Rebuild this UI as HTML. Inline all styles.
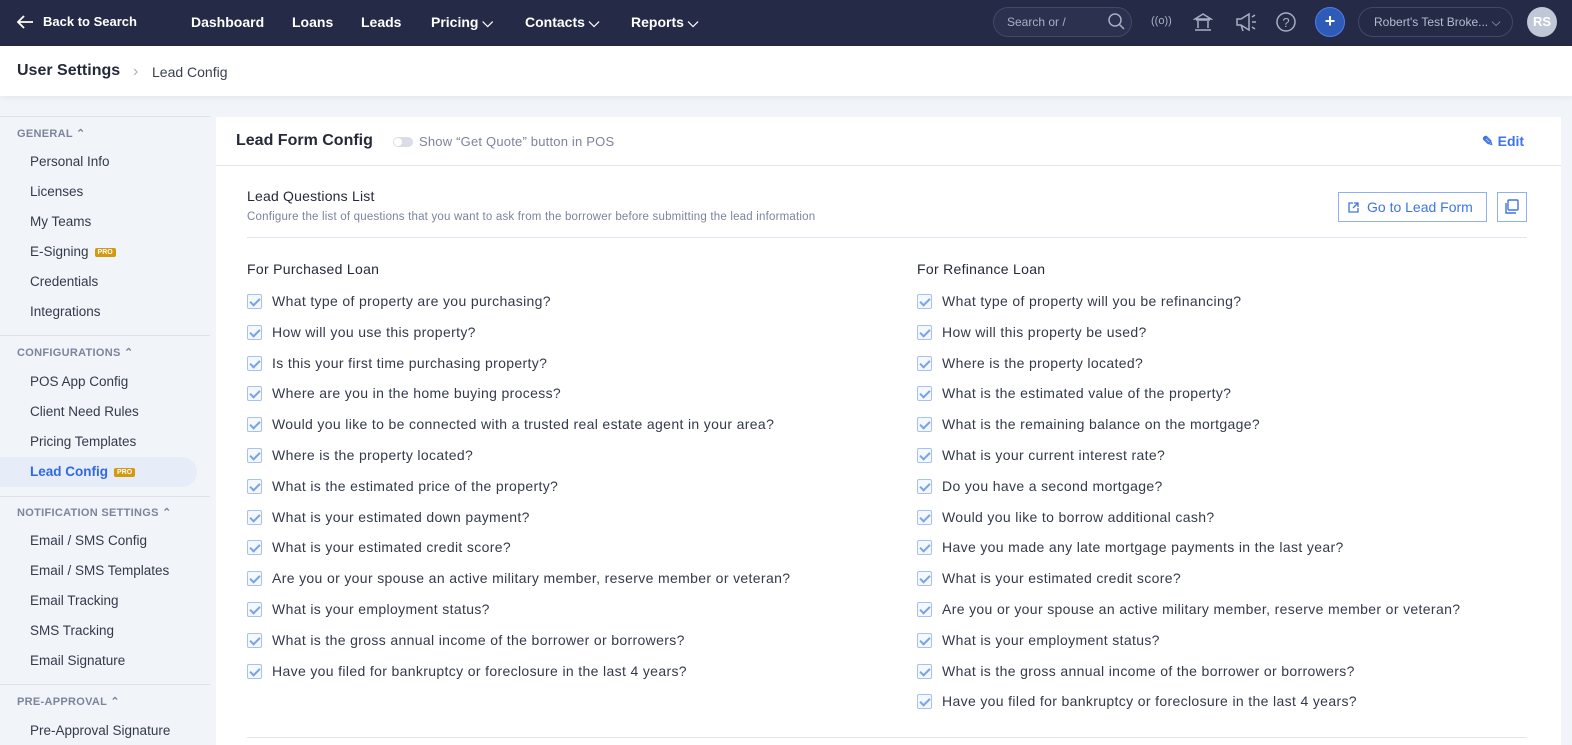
<!DOCTYPE html>
<html><head><meta charset="utf-8"><style>
*{box-sizing:border-box;margin:0;padding:0}
html,body{width:1572px;height:745px;overflow:hidden}
body{background:#f1f4f9;font-family:"Liberation Sans",sans-serif;color:#2b3040;position:relative}
.nav{position:absolute;left:0;top:0;width:1572px;height:46px;background:#252a46;color:#fff}
.nav span{position:absolute;top:14px;font-size:14px;font-weight:bold}
.crumb{position:absolute;top:46px;left:0;width:1572px;height:50px;background:#fff;box-shadow:0 2px 6px rgba(0,0,0,.05)}
.sh{position:absolute;left:17px;font-size:11px;color:#7b849c;font-weight:bold;letter-spacing:.3px}
.si{position:absolute;left:30px;font-size:13.5px;color:#333a4a}
.pro{display:inline-block;background:#d39a10;color:#fff;font-size:7px;font-weight:bold;padding:1px 3px;border-radius:2px;vertical-align:2px;margin-left:6px}
.sep{position:absolute;left:0;width:210px;border-top:1px solid #dde2ea}
.panel{position:absolute;left:216px;top:117px;width:1345px;height:640px;background:#fff}
.q{position:absolute;font-size:14px;color:#333a4a;white-space:nowrap;letter-spacing:.35px}
.cb{position:absolute;width:15px;height:15px;border:1px solid #a9c1f0;border-radius:2px;background:#f4f8ff}
.cb:after{content:"";position:absolute;left:4px;top:1px;width:4px;height:8px;border:solid #7aa2ec;border-width:0 2px 2px 0;transform:rotate(45deg)}
</style></head><body>
<div class="nav">
<svg style="position:absolute;left:16px;top:14px" width="18" height="16" viewBox="0 0 18 16"><path d="M17 8H2M8 2L2 8l6 6" stroke="#fff" stroke-width="1.8" fill="none"/></svg>
<span style="left:43px;font-size:13px">Back to Search</span>
<span style="left:191px">Dashboard</span><span style="left:292px">Loans</span><span style="left:361px">Leads</span>
<span style="left:431px">Pricing ⌵</span><span style="left:525px">Contacts ⌵</span><span style="left:631px">Reports ⌵</span>
<div style="position:absolute;left:993px;top:7px;width:139px;height:30px;border:1px solid #424867;border-radius:15px;background:#2c3150"></div>
<span style="left:1007px;top:15px;font-size:12px;font-weight:normal;color:#a8aec3">Search or /</span>
<svg style="position:absolute;left:1108px;top:13px" width="18" height="18"><circle cx="7" cy="7" r="6" stroke="#a8aec3" stroke-width="1.5" fill="none"/><path d="M11 11l5 5" stroke="#a8aec3" stroke-width="1.5"/></svg>
<span style="left:1151px;top:15px;font-size:11px;font-weight:normal;color:#a8aec3">((o))</span>
<svg style="position:absolute;left:1193px;top:12px" width="20" height="20"><path d="M2 7L10 2l8 5zM3 8h14M5 9v7M15 9v7M2 18h16" stroke="#a8aec3" stroke-width="1.5" fill="none"/></svg>
<svg style="position:absolute;left:1235px;top:12px" width="22" height="20"><path d="M2 7h4l8-5v16l-8-5H2zM6 13l2 6M17 5l3-2M17 10h4M17 15l3 2" stroke="#a8aec3" stroke-width="1.5" fill="none"/></svg>
<svg style="position:absolute;left:1275px;top:11px" width="22" height="22"><circle cx="11" cy="11" r="9" stroke="#a8aec3" stroke-width="1.5" fill="none"/><text x="11" y="16" text-anchor="middle" font-size="13" fill="#a8aec3" font-family="Liberation Sans">?</text></svg>
<div style="position:absolute;left:1315px;top:7px;width:30px;height:30px;border-radius:50%;background:#2f5bb8;border:1px solid #4c7ee8;color:#fff;text-align:center;line-height:27px;font-size:18px;font-weight:bold">+</div>
<div style="position:absolute;left:1358px;top:7px;width:155px;height:30px;border:1px solid #424867;border-radius:15px"></div>
<span style="left:1374px;top:15px;font-size:12px;font-weight:normal;color:#b5bbd0">Robert's Test Broke... ⌵</span>
<div style="position:absolute;left:1527px;top:7px;width:30px;height:30px;border-radius:50%;background:#c0c7d6;color:#fff;text-align:center;line-height:30px;font-size:13px;font-weight:bold">RS</div>
</div>
<div class="crumb"><span style="position:absolute;left:17px;top:16px;font-size:16px;font-weight:bold;color:#252a3a">User Settings</span><span style="position:absolute;left:133px;top:17px;color:#aab0bd">›</span><span style="position:absolute;left:152px;top:18px;font-size:14px;color:#3a4050">Lead Config</span></div>
<div class="sep" style="top:116px"></div>
<div class="sh" style="top:127px">GENERAL ⌃</div>
<div class="si" style="top:154px">Personal Info</div><div class="si" style="top:184px">Licenses</div><div class="si" style="top:214px">My Teams</div>
<div class="si" style="top:244px">E-Signing<span class="pro">PRO</span></div><div class="si" style="top:274px">Credentials</div><div class="si" style="top:304px">Integrations</div>
<div class="sep" style="top:335px"></div>
<div class="sh" style="top:346px">CONFIGURATIONS ⌃</div>
<div class="si" style="top:374px">POS App Config</div><div class="si" style="top:404px">Client Need Rules</div><div class="si" style="top:434px">Pricing Templates</div>
<div style="position:absolute;left:0;top:457px;width:197px;height:30px;background:#e6ecf8;border-radius:0 15px 15px 0"></div>
<div class="si" style="top:464px;color:#2f6ae0;font-weight:bold">Lead Config<span class="pro">PRO</span></div>
<div class="sep" style="top:496px"></div>
<div class="sh" style="top:506px">NOTIFICATION SETTINGS ⌃</div>
<div class="si" style="top:533px">Email / SMS Config</div><div class="si" style="top:563px">Email / SMS Templates</div><div class="si" style="top:593px">Email Tracking</div><div class="si" style="top:623px">SMS Tracking</div><div class="si" style="top:653px">Email Signature</div>
<div class="sep" style="top:684px"></div>
<div class="sh" style="top:695px">PRE-APPROVAL ⌃</div>
<div class="si" style="top:723px">Pre-Approval Signature</div>
<div class="panel">
<div style="position:absolute;left:20px;top:15px;font-size:16px;font-weight:bold;color:#252a3a">Lead Form Config</div>
<div style="position:absolute;left:177px;top:20px;width:20px;height:10px;border-radius:5px;background:#d8dde6"></div>
<div style="position:absolute;left:178px;top:21px;width:8px;height:8px;border-radius:50%;background:#fff"></div>
<div style="position:absolute;left:203px;top:17px;font-size:13px;color:#7b849c;letter-spacing:.2px">Show “Get Quote” button in POS</div>
<div style="position:absolute;left:1266px;top:16px;font-size:14px;color:#3d74e8;font-weight:bold">✎ Edit</div>
<div style="position:absolute;left:0;top:48px;width:1345px;border-top:1px solid #e1e6ee"></div>
<div style="position:absolute;left:31px;top:71px;font-size:14px;color:#252a3a;letter-spacing:.2px">Lead Questions List</div>
<div style="position:absolute;left:31px;top:94px;font-size:11.5px;color:#7b849c;letter-spacing:.2px">Configure the list of questions that you want to ask from the borrower before submitting the lead information</div>
<div style="position:absolute;left:1122px;top:75px;width:149px;height:30px;border:1px solid #8fb1f2;color:#3d74e8;font-size:14px;line-height:28px;padding-left:28px">Go to Lead Form</div>
<svg style="position:absolute;left:1132px;top:85px" width="11" height="11"><path d="M5 1H1v9h9V6M6 1h4v4M10 1L5 6" stroke="#3d74e8" stroke-width="1.3" fill="none"/></svg>
<div style="position:absolute;left:1281px;top:75px;width:30px;height:30px;border:1px solid #8fb1f2"></div>
<svg style="position:absolute;left:1288px;top:82px" width="16" height="16"><rect x="4" y="1" width="10" height="10" rx="1" stroke="#3d74e8" stroke-width="1.4" fill="none"/><path d="M2 4v10h10" stroke="#3d74e8" stroke-width="1.4" fill="none"/></svg>
<div style="position:absolute;left:31px;top:120px;width:1280px;border-top:1px solid #e1e6ee"></div>
<div style="position:absolute;left:31px;top:144px;font-size:14px;color:#252a3a;letter-spacing:.3px">For Purchased Loan</div>
<div style="position:absolute;left:701px;top:144px;font-size:14px;color:#252a3a;letter-spacing:.3px">For Refinance Loan</div>
<div style="position:absolute;left:31px;top:620px;width:1280px;border-top:1px solid #e1e6ee"></div>
</div>
<div id="qs"></div>
<script>
var L=["What type of property are you purchasing?","How will you use this property?","Is this your first time purchasing property?","Where are you in the home buying process?","Would you like to be connected with a trusted real estate agent in your area?","Where is the property located?","What is the estimated price of the property?","What is your estimated down payment?","What is your estimated credit score?","Are you or your spouse an active military member, reserve member or veteran?","What is your employment status?","What is the gross annual income of the borrower or borrowers?","Have you filed for bankruptcy or foreclosure in the last 4 years?"];
var R=["What type of property will you be refinancing?","How will this property be used?","Where is the property located?","What is the estimated value of the property?","What is the remaining balance on the mortgage?","What is your current interest rate?","Do you have a second mortgage?","Would you like to borrow additional cash?","Have you made any late mortgage payments in the last year?","What is your estimated credit score?","Are you or your spouse an active military member, reserve member or veteran?","What is your employment status?","What is the gross annual income of the borrower or borrowers?","Have you filed for bankruptcy or foreclosure in the last 4 years?"];
var h="";
function add(a,x){a.forEach(function(t,i){var y=294+i*30.8;h+='<div class="cb" style="left:'+x+'px;top:'+y+'px"></div><div class="q" style="left:'+(x+25)+'px;top:'+(y-1)+'px">'+t+'</div>';});}
add(L,247);add(R,917);
document.getElementById("qs").innerHTML=h;
</script>
</body></html>
